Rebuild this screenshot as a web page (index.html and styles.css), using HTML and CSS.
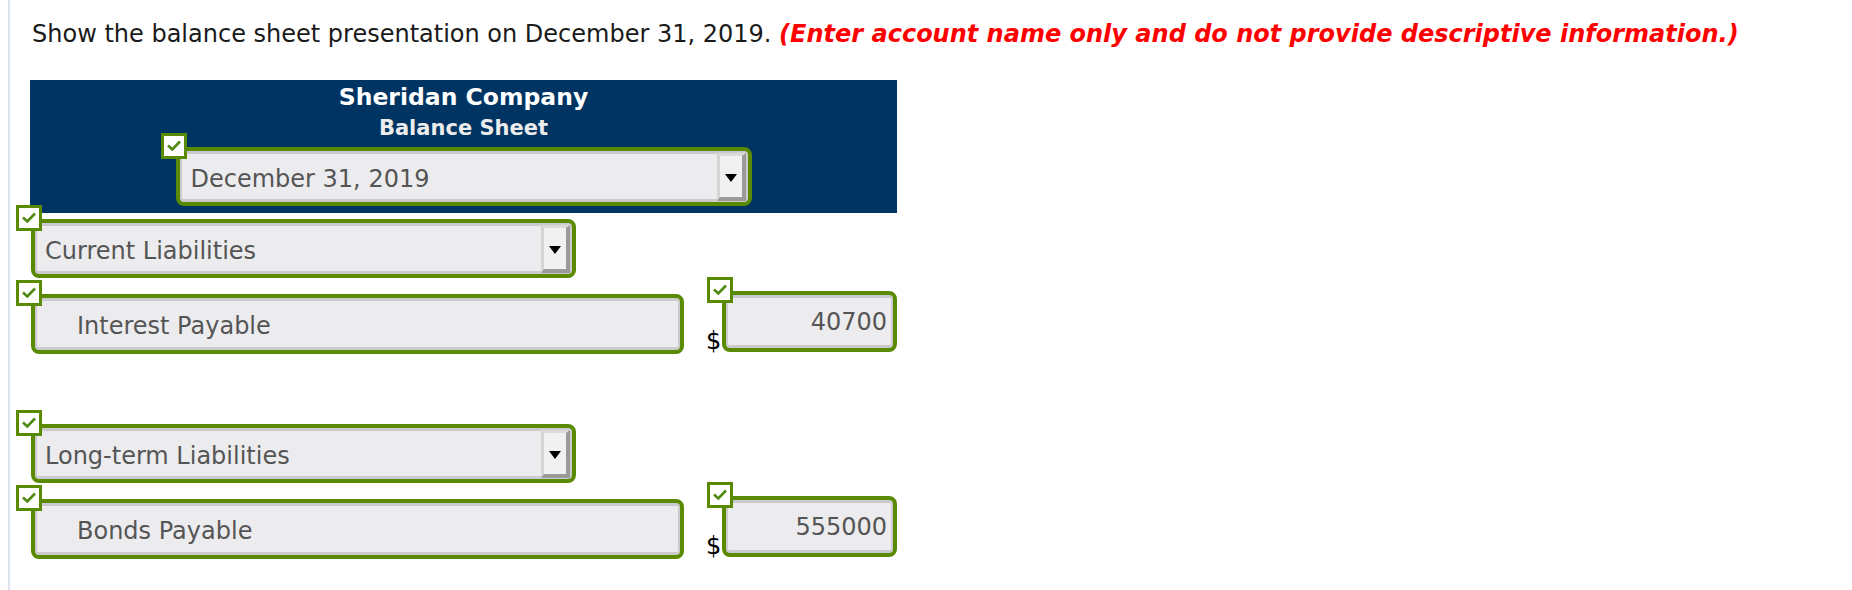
FILE: index.html
```html
<!DOCTYPE html>
<html lang="en">
<head>
<meta charset="utf-8">
<title>Balance Sheet</title>
<link rel="stylesheet" href="styles.css">
</head>
<body>
<div class="page">
  <p class="prompt">Show the balance sheet presentation on December 31, 2019. <span class="note">(Enter account name only and do not provide descriptive information.)</span></p>
  <div class="sheet">
    <div class="sheet-head">
      <div class="company">Sheridan Company</div>
      <div class="doc">Balance Sheet</div>
      <div class="field select date">
        <span class="check"><svg viewBox="0 0 20 20"><polyline points="4,9.5 8.3,13.5 16,5.5"/></svg></span>
        <span class="val">December 31, 2019</span>
        <span class="btn"><i class="arrow"></i></span>
      </div>
    </div>

    <div class="field select section">
      <span class="check"><svg viewBox="0 0 20 20"><polyline points="4,9.5 8.3,13.5 16,5.5"/></svg></span>
      <span class="val">Current Liabilities</span>
      <span class="btn"><i class="arrow"></i></span>
    </div>
    <div class="row">
      <div class="field account">
        <span class="check"><svg viewBox="0 0 20 20"><polyline points="4,9.5 8.3,13.5 16,5.5"/></svg></span>
        <span class="val">Interest Payable</span>
      </div>
      <span class="dollar">$</span>
      <div class="field amount">
        <span class="check"><svg viewBox="0 0 20 20"><polyline points="4,9.5 8.3,13.5 16,5.5"/></svg></span>
        <span class="val">40700</span>
      </div>
    </div>

    <div class="field select section lt">
      <span class="check"><svg viewBox="0 0 20 20"><polyline points="4,9.5 8.3,13.5 16,5.5"/></svg></span>
      <span class="val">Long-term Liabilities</span>
      <span class="btn"><i class="arrow"></i></span>
    </div>
    <div class="row">
      <div class="field account">
        <span class="check"><svg viewBox="0 0 20 20"><polyline points="4,9.5 8.3,13.5 16,5.5"/></svg></span>
        <span class="val">Bonds Payable</span>
      </div>
      <span class="dollar">$</span>
      <div class="field amount">
        <span class="check"><svg viewBox="0 0 20 20"><polyline points="4,9.5 8.3,13.5 16,5.5"/></svg></span>
        <span class="val">555000</span>
      </div>
    </div>
  </div>
</div>
</body>
</html>
```
FILE: styles.css
```css
html, body {
  margin: 0;
  padding: 0;
  background: #ffffff;
}
body {
  font-family: "DejaVu Sans", Verdana, sans-serif;
  color: #1a1a1a;
}
.page {
  margin-left: 8px;
  border-left: 2px solid #dde3ec;
  min-height: 590px;
  box-sizing: border-box;
  padding: 19px 0 0 20px;
}
.prompt {
  margin: 0 0 31px 2px;
  font-size: 24px;
  line-height: 30px;
  white-space: nowrap;
}
.note {
  color: #ff0000;
  font-weight: bold;
  font-style: italic;
}
.sheet {
  width: 867px;
}
.sheet-head {
  background: #003462;
  padding: 3px 0 7px;
  display: flex;
  flex-direction: column;
  align-items: center;
  color: #ffffff;
  font-weight: bold;
}
.company {
  font-size: 23.5px;
  line-height: 28px;
}
.doc {
  font-size: 21px;
  line-height: 26px;
  margin-top: 4px;
  color: #ededed;
}
.field {
  position: relative;
  box-sizing: border-box;
  display: flex;
  align-items: stretch;
  border: 4px solid #5a8a00;
  border-radius: 8px;
  background: #ececee;
  box-shadow: inset 0 3px 0 #cbcbcf, inset 0 -3px 0 #cbcbcf, inset 2px 0 0 #cbcbcf, inset -2px 0 0 #cbcbcf;
  color: #555555;
  font-size: 24px;
  font-weight: normal;
}
.val {
  flex: 1;
  display: flex;
  align-items: center;
  white-space: nowrap;
}
.check {
  position: absolute;
  left: -19px;
  top: -18px;
  width: 26px;
  height: 26px;
  box-sizing: border-box;
  border: 3px solid #5a8a00;
  background: #ffffff;
  z-index: 2;
}
.check svg {
  display: block;
  width: 20px;
  height: 20px;
  fill: none;
  stroke: #4f8a10;
  stroke-width: 2.6;
}
.select {
  height: 59px;
}
.select .val {
  padding: 4px 0 0 10px;
}
.date {
  width: 576px;
  margin-top: 6px;
}
.date .val {
  padding-left: 11px;
}
.section {
  width: 545px;
  margin: 6px 0 0 1px;
}
.section.lt {
  margin-top: 70px;
}
.btn {
  width: 29px;
  margin: 2px 2px 1px 0;
  box-sizing: border-box;
  border-left: 3px solid #d4d4d4;
  border-top: 3px solid #dadada;
  border-right: 4px solid #9a9a9a;
  border-bottom: 4px solid #9a9a9a;
  background: #f1f1f1;
  display: flex;
  align-items: center;
  justify-content: center;
}
.arrow {
  display: block;
  width: 0;
  height: 0;
  border-left: 6px solid transparent;
  border-right: 6px solid transparent;
  border-top: 8px solid #000000;
  margin-top: 2px;
}
.row {
  display: flex;
  align-items: flex-start;
  margin-top: 13px;
}
.account {
  width: 654px;
  height: 60px;
  margin: 3px 0 0 1px;
}
.account .val {
  padding: 3px 0 0 42px;
}
.dollar {
  align-self: flex-end;
  margin: 0 1px 2px 22px;
  font-size: 24px;
  line-height: 22px;
  color: #000000;
}
.amount {
  width: 175px;
  height: 61px;
}
.amount .val {
  justify-content: flex-end;
  padding-right: 6px;
}
```
